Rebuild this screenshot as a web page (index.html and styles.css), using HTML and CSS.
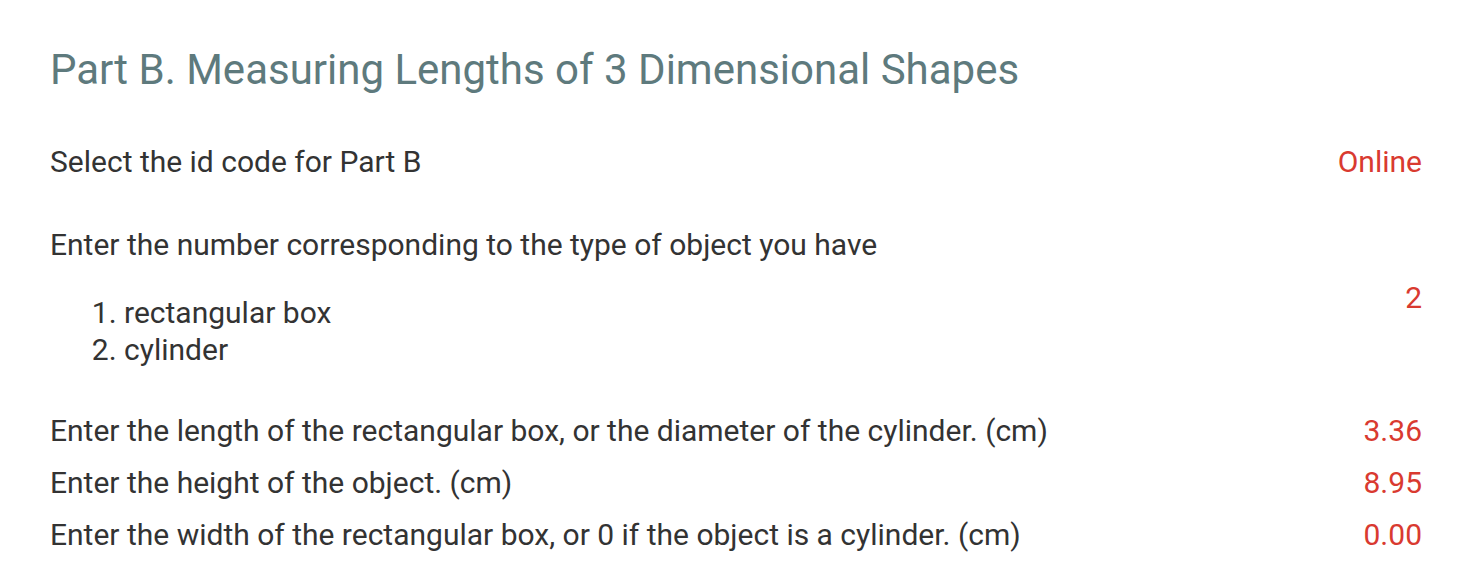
FILE: index.html
```html
<!DOCTYPE html>
<html>
<head>
<meta charset="utf-8">
<link rel="stylesheet" href="styles.css">
</head>
<body>
<div class="page">
  <h1 class="title">Part B. Measuring Lengths of 3 Dimensional Shapes</h1>
  <div class="row row-first">
    <div class="label">Select the id code for Part B</div>
    <div class="value">Online</div>
  </div>
  <div class="row row-list">
    <div class="label">
      <p class="q">Enter the number corresponding to the type of object you have</p>
      <ol class="opts">
        <li>rectangular box</li>
        <li>cylinder</li>
      </ol>
    </div>
    <div class="value">2</div>
  </div>
  <div class="row row-tight">
    <div class="label">Enter the length of the rectangular box, or the diameter of the cylinder. (cm)</div>
    <div class="value">3.36</div>
  </div>
  <div class="row row-tight">
    <div class="label">Enter the height of the object. (cm)</div>
    <div class="value">8.95</div>
  </div>
  <div class="row row-tight">
    <div class="label">Enter the width of the rectangular box, or 0 if the object is a cylinder. (cm)</div>
    <div class="value">0.00</div>
  </div>
</div>
</body>
</html>
```
FILE: styles.css
```css
html, body {
  margin: 0;
  padding: 0;
  background: #ffffff;
}
body {
  font-family: Roboto, "Liberation Sans", sans-serif;
  color: #333333;
}
.page {
  padding: 40px 40px 0 50px;
}
.title {
  margin: 0;
  font-size: 42px;
  font-weight: 400;
  color: #5e7a7d;
  line-height: 60px;
}
.row {
  display: flex;
  justify-content: space-between;
  align-items: center;
  font-size: 30px;
  line-height: 36px;
}
.row-first {
  margin-top: 44px;
}
.row-list {
  margin-top: 47px;
}
.q {
  margin: 0;
}
.opts {
  margin: 31px 0 0 0;
  padding-left: 74px;
  line-height: 37px;
}
.row-tight {
  height: 52px;
}
.row-list + .row-tight {
  margin-top: 37px;
}
.value {
  color: #d93a30;
  text-align: right;
}
```
